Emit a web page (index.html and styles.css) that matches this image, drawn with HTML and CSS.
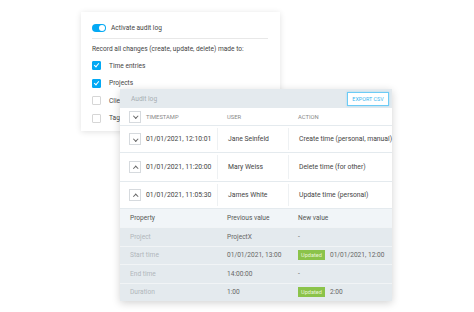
FILE: index.html
```html
<!DOCTYPE html>
<html lang="en">
<head>
    <meta charset="UTF-8">
    <title>Audit log</title>
    <link rel="stylesheet" href="styles.css">
</head>
<body>
    <div class="scene">
        <div class="settings-card">
            <div class="toggle-row">
                <span class="toggle"><span class="knob"></span></span>
                <span>Activate audit log</span>
            </div>
            <p class="record-text">Record all changes (create, update, delete) made to:</p>
            <div class="check-row"><span class="check on"></span>Time entries</div>
            <div class="check-row"><span class="check on"></span>Projects</div>
            <div class="check-row"><span class="check"></span>Clients</div>
            <div class="check-row"><span class="check"></span>Tags</div>
        </div>

        <div class="log-card">
            <div class="log-head">
                <span>Audit log</span>
                <button class="export-btn">EXPORT CSV</button>
            </div>
            <div class="log-row col-head">
                <div class="cell first"><span class="chev down"></span>TIMESTAMP</div>
                <div class="cell">USER</div>
                <div class="cell">ACTION</div>
            </div>
            <div class="log-row entry">
                <div class="cell first"><span class="chev down"></span>01/01/2021, 12:10:01</div>
                <div class="cell sep">Jane Seinfeld</div>
                <div class="cell sep">Create time (personal, manual)</div>
            </div>
            <div class="log-row entry tall">
                <div class="cell first"><span class="chev up"></span>01/01/2021, 11:20:00</div>
                <div class="cell sep">Mary Weiss</div>
                <div class="cell sep">Delete time (for other)</div>
            </div>
            <div class="log-row entry">
                <div class="cell first"><span class="chev up"></span>01/01/2021, 11:05:30</div>
                <div class="cell sep">James White</div>
                <div class="cell sep">Update time (personal)</div>
            </div>
            <div class="log-row detail-head">
                <div class="cell">Property</div>
                <div class="cell">Previous value</div>
                <div class="cell">New value</div>
            </div>
            <div class="log-row detail">
                <div class="cell prop">Project</div>
                <div class="cell">ProjectX</div>
                <div class="cell">-</div>
            </div>
            <div class="log-row detail">
                <div class="cell prop">Start time</div>
                <div class="cell">01/01/2021, 13:00</div>
                <div class="cell"><span class="badge">Updated</span>01/01/2021, 12:00</div>
            </div>
            <div class="log-row detail">
                <div class="cell prop">End time</div>
                <div class="cell">14:00:00</div>
                <div class="cell">-</div>
            </div>
            <div class="log-row detail">
                <div class="cell prop">Duration</div>
                <div class="cell">1:00</div>
                <div class="cell"><span class="badge">Updated</span>2:00</div>
            </div>
        </div>
    </div>
</body>
</html>
```
FILE: styles.css
```css
body {
    margin: 0;
    background: #ffffff;
    font-family: Roboto, "Liberation Sans", sans-serif;
    color: #333;
}
.scene {
    position: relative;
    width: 474px;
    height: 312px;
}
.settings-card {
    position: absolute;
    left: 81px;
    top: 12px;
    width: 199px;
    height: 119px;
    box-sizing: border-box;
    padding: 11px 11px 0 11px;
    background: #fff;
    box-shadow: 0 1px 6px rgba(0, 0, 0, 0.12);
    font-size: 6.6px;
}
.toggle-row {
    display: flex;
    align-items: center;
    gap: 5px;
    height: 9px;
    padding-bottom: 6px;
    border-bottom: 1px solid #e8e8e8;
    margin-right: 1px;
    color: #444;
}
.toggle {
    width: 14px;
    height: 8px;
    border-radius: 4px;
    background: #03a9f4;
    position: relative;
}
.knob {
    position: absolute;
    right: 1px;
    top: 1px;
    width: 6px;
    height: 6px;
    border-radius: 50%;
    background: #fff;
}
.record-text {
    margin: 6px 0 4px;
    color: #444;
}
.check-row {
    display: flex;
    align-items: center;
    gap: 8px;
    height: 17.5px;
    color: #444;
}
.check {
    width: 7px;
    height: 7px;
    border: 1px solid #d6d6d6;
    border-radius: 1px;
    position: relative;
}
.check.on {
    background: #03a9f4;
    border-color: #03a9f4;
}
.check.on::after {
    content: "";
    position: absolute;
    left: 2px;
    top: 0px;
    width: 2px;
    height: 4px;
    border: solid #fff;
    border-width: 0 1.2px 1.2px 0;
    transform: rotate(40deg);
}
.log-card {
    position: absolute;
    left: 120px;
    top: 89px;
    width: 272px;
    background: #fff;
    box-shadow: 0 2px 8px rgba(0, 0, 0, 0.18);
    font-size: 6.6px;
}
.log-head {
    display: flex;
    align-items: center;
    justify-content: space-between;
    height: 19px;
    padding: 0 3px 0 11px;
    background: #e4eaee;
    color: #a7aeb3;
}
.export-btn {
    height: 14px;
    width: 42px;
    padding: 0;
    border: 1px solid #6ccbf6;
    background: #fff;
    color: #36b6f0;
    font-family: inherit;
    font-size: 5.4px;
    box-shadow: 0 0 2px rgba(3, 169, 244, 0.3);
}
.log-row {
    display: grid;
    grid-template-columns: 97px 71px 104px;
    align-items: stretch;
    box-sizing: border-box;
}
.cell {
    display: flex;
    align-items: center;
    padding-left: 10px;
    white-space: nowrap;
}
.cell.first {
    padding-left: 9px;
    gap: 5px;
}
.col-head {
    height: 18px;
    border-bottom: 1px solid #e4eaee;
    color: #888;
    font-size: 5.8px;
}
.entry {
    height: 27px;
    border-bottom: 1px solid #e4eaee;
    color: #444;
    font-size: 6.8px;
}
.entry.tall {
    height: 29px;
}
.cell.sep {
    border-left: 1px solid #eef1f3;
    margin: 2px 0;
}
.chev {
    width: 10px;
    height: 10px;
    border: 1px solid #d6dade;
    position: relative;
    flex: none;
}
.chev::after {
    content: "";
    position: absolute;
    left: 3.5px;
    width: 2.5px;
    height: 2.5px;
    border: solid #666;
    border-width: 0 0.8px 0.8px 0;
}
.chev.down::after {
    top: 2.5px;
    transform: rotate(45deg);
}
.chev.up::after {
    top: 4.5px;
    transform: rotate(-135deg);
}
.detail-head {
    height: 18px;
    background: #f1f5f8;
    color: #555;
    font-size: 6.6px;
}
.detail {
    height: 18.5px;
    background: #e4eaee;
    border-top: 1px solid #f1f4f6;
    color: #666;
    font-size: 6.6px;
}
.prop {
    color: #b0b6bb;
}
.badge {
    display: inline-block;
    height: 10px;
    line-height: 10px;
    padding: 0 3px;
    margin-right: 5px;
    background: #8bc34a;
    color: #e8f5d8;
    font-size: 5.6px;
}
```
